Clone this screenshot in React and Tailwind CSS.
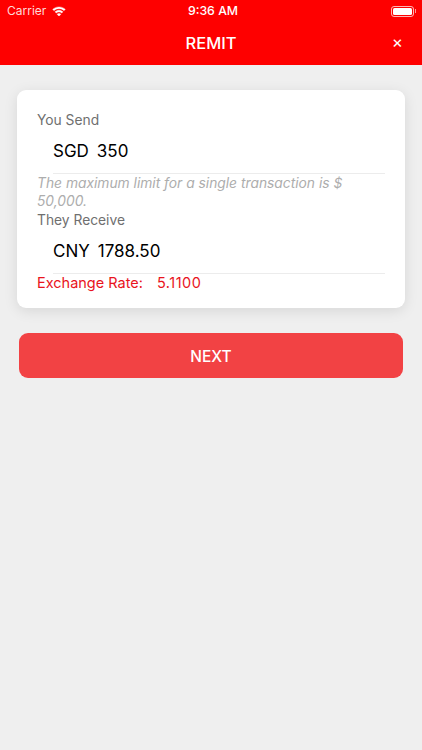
const FONT = { fontFamily: 'Inter, Roboto, sans-serif' }

function Wifi() {
  return (
    <svg width="14" height="10.5" viewBox="0 0 16 12" fill="white" stroke="white" strokeWidth="0.4">
      <path d="M8 1C5.2 1 2.7 2 .8 3.8l1.4 1.5C3.7 3.8 5.8 3 8 3s4.3.8 5.8 2.3l1.4-1.5C13.3 2 10.8 1 8 1z" />
      <path d="M8 4.8c-1.8 0-3.4.7-4.6 1.8l1.4 1.5C5.6 7.3 6.8 6.8 8 6.8s2.4.5 3.2 1.3l1.4-1.5C11.4 5.5 9.8 4.8 8 4.8z" />
      <path d="M8 8.5c-.9 0-1.6.3-2.2.9L8 11.7l2.2-2.3c-.6-.6-1.3-.9-2.2-.9z" />
    </svg>
  )
}

function Battery() {
  return (
    <div className="flex items-center gap-[1px]">
      <div className="h-[11px] w-[23px] rounded-[3px] border border-white/70 p-[1px]">
        <div className="h-full w-full rounded-[1.5px] bg-white" />
      </div>
      <div className="h-[4px] w-[1px] bg-white/60" />
    </div>
  )
}

function AmountField({ code, amount }) {
  return (
    <div className="ml-4 mt-[8px] flex h-[36px] gap-[8px] border-b border-[#ececec] text-[17px] leading-[26px] text-black">
      <span>{code}</span>
      <span>{amount}</span>
    </div>
  )
}

export default function App() {
  return (
    <div className="flex h-[750px] w-[422px] flex-col overflow-hidden bg-[#efefef]" style={FONT}>
      <header className="h-[65px] bg-[#fe0000] text-white">
        <div className="flex h-[21px] items-center justify-between pl-[7px] pr-[6px] pt-[1px] text-[12.3px]">
          <div className="flex items-center gap-[6px]">
            <span className="text-[12px] text-[#ffd9d9]">Carrier</span>
            <Wifi />
          </div>
          <span className="absolute left-[2px] w-[422px] text-center font-medium">9:36 AM</span>
          <Battery />
        </div>
        <div className="relative flex h-[44px] items-center justify-center text-[16.5px] font-medium">
          REMIT
          <span className="absolute right-[19px] top-[10px] text-[17px] font-normal leading-[22px]">×</span>
        </div>
      </header>

      <main className="flex flex-col px-[17px] pt-[25px]">
        <section className="h-[218px] rounded-[9px] bg-white pl-5 pr-5 pt-[21px] shadow-[0_3px_14px_rgba(0,0,0,0.1)]">
          <div className="text-[13.8px] leading-[19px] text-[#6f6f6f]">You Send</div>
          <AmountField code="SGD" amount="350" />
          <p className="text-[13.8px] italic leading-[18px] text-[#adadad]">
            The maximum limit for a single transaction is $ 50,000.
          </p>
          <div className="text-[13.8px] leading-[20px] text-[#6f6f6f]">They Receive</div>
          <AmountField code="CNY" amount="1788.50" />
          <div className="-mt-[1px] flex gap-[14px] text-[14.5px] leading-[20px] text-[#e9141d]">
            <span>Exchange Rate:</span>
            <span className="tracking-[0.5px]">5.1100</span>
          </div>
        </section>

        <button className="mx-[2px] mt-[25px] flex h-[45px] items-center justify-center rounded-[9px] bg-[#f24244] pt-[2px] text-[15.5px] font-medium text-white">
          NEXT
        </button>
      </main>
    </div>
  )
}
